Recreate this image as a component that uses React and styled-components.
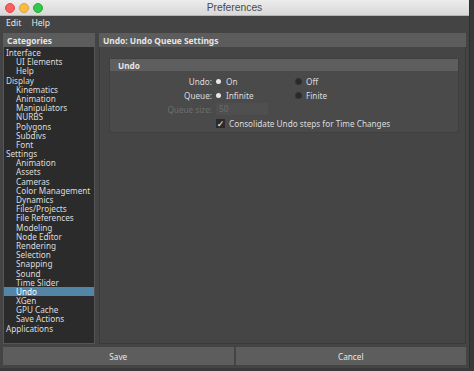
import styled, { createGlobalStyle } from "styled-components"

const Global = createGlobalStyle`
    html, body {
        margin: 0;
        padding: 0;
        background: #393939;
        overflow: hidden;
    }
    * { box-sizing: border-box; }
`
const Window = styled.div`
    width: 470px;
    height: 368px;
    display: flex;
    flex-direction: column;
    background: #444444;
    font-family: "Noto Sans", "DejaVu Sans", sans-serif;
    font-size: 8.2px;
    color: #dcdcdc;
    border-right: 1px solid #2e2e2e;
`
const TitleBar = styled.div`
    height: 16px;
    display: grid;
    grid-template-columns: 1fr auto 1fr;
    align-items: center;
    background: linear-gradient(#ececec, #d8d8d8);
    border-bottom: 1px solid #b5b5b5;
    padding: 0 5px;
`
const Lights = styled.div`
    display: flex;
    gap: 4px;
`
const Light = styled.span`
    width: 10px;
    height: 10px;
    border-radius: 50%;
    background: ${(p) => p.color};
    border: 1px solid ${(p) => p.edge};
`
const WindowTitle = styled.div`
    font-family: "Liberation Sans", Arial, sans-serif;
    font-size: 10.3px;
    color: #4a4a4a;
`
const MenuBar = styled.div`
    height: 14px;
    display: flex;
    align-items: center;
    gap: 10px;
    padding: 0 6px;
    background: #444;
    color: #e4e4e4;
    font-size: 8.6px;
`
const Body = styled.div`
    flex: 1;
    display: flex;
    gap: 4px;
    padding: 3px 3px 2px 3px;
    min-height: 0;
`
const Sidebar = styled.div`
    width: 92px;
    display: flex;
    flex-direction: column;
`
const Main = styled.div`
    flex: 1;
    display: flex;
    flex-direction: column;
`
const Header = styled.div`
    height: 14px;
    display: flex;
    align-items: center;
    padding: 0 4px;
    background: #5c5c5c;
    color: #e6e6e6;
    font-weight: 700;
    font-size: 8.4px;
`
const List = styled.div`
    flex: 1;
    background: #2b2b2b;
    border: 1px solid #555;
    border-top: none;
    padding-top: 1px;
`
const Item = styled.div`
    height: 9.2px;
    line-height: 9.2px;
    padding-left: ${(p) => (p.child ? 12 : 2)}px;
    background: ${(p) => (p.selected ? "#5285a6" : "transparent")};
    color: ${(p) => (p.selected ? "#fff" : "#dcdcdc")};
    white-space: nowrap;
`
const Panel = styled.div`
    flex: 1;
    background: #454545;
    border: 1px solid #3a3a3a;
    border-top: none;
    padding: 11px 6px 0 9px;
`
const Frame = styled.div`
    background: #4a4a4a;
    border: 1px solid #3f3f3f;
`
const FrameHeader = styled.div`
    height: 12px;
    display: flex;
    align-items: center;
    padding: 0 8px;
    background: #5e5e5e;
    font-weight: 700;
    color: #e6e6e6;
`
const FrameBody = styled.div`
    display: grid;
    grid-template-columns: 106px 80px 1fr;
    grid-auto-rows: 14px;
    align-items: center;
    padding: 3px 0 2px;
`
const Label = styled.div`
    text-align: right;
    padding-right: 4px;
    color: ${(p) => (p.disabled ? "#6e6e6e" : "#dcdcdc")};
`
const Radio = styled.div`
    display: flex;
    align-items: center;
    gap: 5px;
    &::before {
        content: "";
        width: 5px;
        height: 5px;
        border-radius: 50%;
        background: ${(p) => (p.on ? "#e8e8e8" : "#2a2a2a")};
        box-shadow: ${(p) => (p.on ? "none" : "0 0 0 1px #333")};
    }
`
const SizeInput = styled.div`
    width: 52px;
    height: 12px;
    background: #4f4f4f;
    color: #6e6e6e;
    padding-left: 3px;
    line-height: 12px;
`
const Check = styled.div`
    grid-column: 2 / 4;
    display: flex;
    align-items: center;
    gap: 4px;
`
const Box = styled.span`
    width: 9px;
    height: 9px;
    background: #2b2b2b;
    display: flex;
    align-items: center;
    justify-content: center;
    color: #fff;
    font-size: 9px;
    line-height: 9px;
`
const Footer = styled.div`
    display: flex;
    gap: 2px;
    padding: 1px 3px 3px;
`
const Button = styled.div`
    flex: 1;
    height: 18px;
    background: #5d5d5d;
    display: flex;
    align-items: center;
    justify-content: center;
    color: #e8e8e8;
`

const items = [
    ["Interface"], ["UI Elements", 1], ["Help", 1],
    ["Display"], ["Kinematics", 1], ["Animation", 1], ["Manipulators", 1], ["NURBS", 1],
    ["Polygons", 1], ["Subdivs", 1], ["Font", 1],
    ["Settings"], ["Animation", 1], ["Assets", 1], ["Cameras", 1], ["Color Management", 1],
    ["Dynamics", 1], ["Files/Projects", 1], ["File References", 1], ["Modeling", 1],
    ["Node Editor", 1], ["Rendering", 1], ["Selection", 1], ["Snapping", 1], ["Sound", 1],
    ["Time Slider", 1], ["Undo", 1], ["XGen", 1], ["GPU Cache", 1], ["Save Actions", 1],
    ["Applications"],
]

export default function App() {
    return (
        <Window>
            <Global />
            <TitleBar>
                <Lights>
                    <Light color="#fc605c" edge="#de4a46" />
                    <Light color="#fdbc40" edge="#de9f34" />
                    <Light color="#34c84a" edge="#27aa35" />
                </Lights>
                <WindowTitle>Preferences</WindowTitle>
                <div />
            </TitleBar>
            <MenuBar>
                <span>Edit</span>
                <span>Help</span>
            </MenuBar>
            <Body>
                <Sidebar>
                    <Header>Categories</Header>
                    <List>
                        {items.map(([name, child], i) => (
                            <Item key={i} child={child} selected={name === "Undo"}>{name}</Item>
                        ))}
                    </List>
                </Sidebar>
                <Main>
                    <Header>Undo: Undo Queue Settings</Header>
                    <Panel>
                        <Frame>
                            <FrameHeader>Undo</FrameHeader>
                            <FrameBody>
                                <Label>Undo:</Label>
                                <Radio on>On</Radio>
                                <Radio>Off</Radio>
                                <Label>Queue:</Label>
                                <Radio on>Infinite</Radio>
                                <Radio>Finite</Radio>
                                <Label disabled>Queue size:</Label>
                                <SizeInput>50</SizeInput>
                                <div />
                                <div />
                                <Check><Box>✓</Box>Consolidate Undo steps for Time Changes</Check>
                            </FrameBody>
                        </Frame>
                    </Panel>
                </Main>
            </Body>
            <Footer>
                <Button>Save</Button>
                <Button>Cancel</Button>
            </Footer>
        </Window>
    )
}
